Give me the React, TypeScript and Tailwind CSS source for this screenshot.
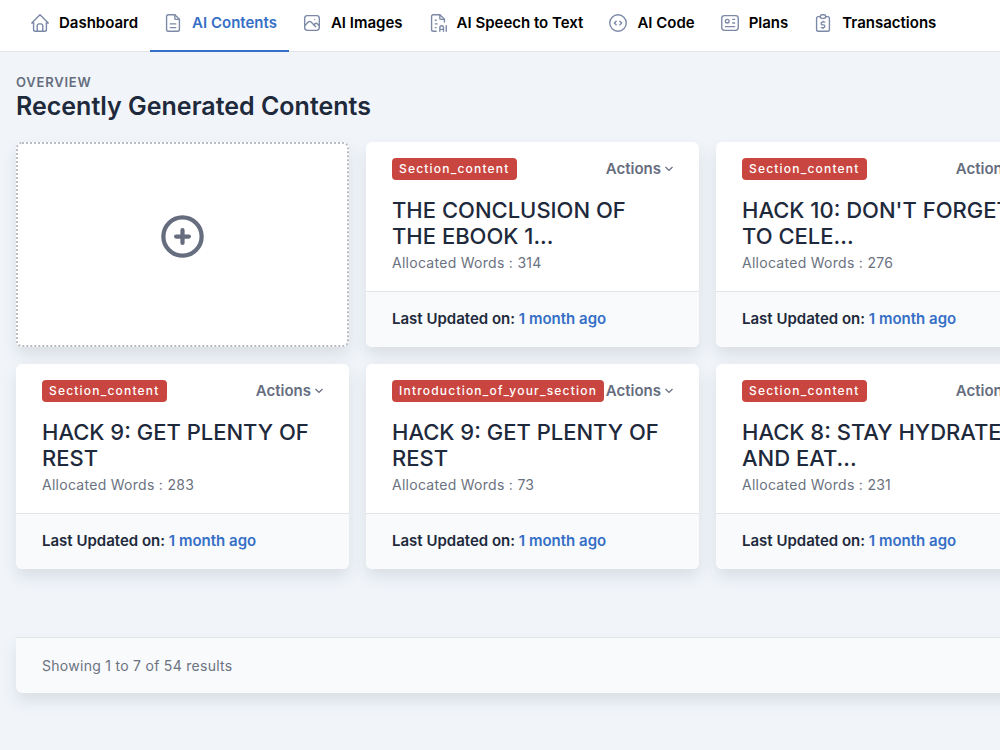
import type { FC, ReactNode } from "react";

type NavItem = {
	label: string;
	icon: ReactNode;
	active?: boolean;
};

type Content = {
	tag: string;
	title: string;
	words: number;
};

const Icon: FC<{ children: ReactNode }> = ({ children }) => (
	<svg
		className="size-[22px] shrink-0 text-[#7c89a6]"
		viewBox="0 0 24 24"
		fill="none"
		stroke="currentColor"
		strokeWidth="1.5"
		strokeLinecap="round"
		strokeLinejoin="round"
		aria-hidden="true"
	>
		{children}
	</svg>
);

const navItems: NavItem[] = [
	{
		label: "Dashboard",
		icon: (
			<Icon>
				<path d="M5 12H3l9-9 9 9h-2" />
				<path d="M5 12v7a2 2 0 0 0 2 2h10a2 2 0 0 0 2-2v-7" />
				<path d="M9 21v-6a2 2 0 0 1 2-2h2a2 2 0 0 1 2 2v6" />
			</Icon>
		),
	},
	{
		label: "AI Contents",
		active: true,
		icon: (
			<Icon>
				<path d="M14 3v4a1 1 0 0 0 1 1h4" />
				<path d="M17 21H7a2 2 0 0 1-2-2V5a2 2 0 0 1 2-2h7l5 5v11a2 2 0 0 1-2 2z" />
				<path d="M9 13h6M9 17h6" />
			</Icon>
		),
	},
	{
		label: "AI Images",
		icon: (
			<Icon>
				<path d="M15 8h.01" />
				<rect x="4" y="4" width="16" height="16" rx="3" />
				<path d="M4 15l4-4a3 5 0 0 1 3 0l5 5" />
				<path d="M14 14l1-1a3 5 0 0 1 3 0l2 2" />
			</Icon>
		),
	},
	{
		label: "AI Speech to Text",
		icon: (
			<Icon>
				<path d="M14 3v4a1 1 0 0 0 1 1h4" />
				<path d="M10 21H7a2 2 0 0 1-2-2V5a2 2 0 0 1 2-2h7l5 5v3" />
				<path d="M9 9h1M9 13h2M9 17h1" />
				<path d="M14 21v-4a2 2 0 1 1 4 0v4M14 19h4M21 15v6" />
			</Icon>
		),
	},
	{
		label: "AI Code",
		icon: (
			<Icon>
				<circle cx="12" cy="12" r="9" />
				<path d="M10 10l-2 2 2 2M14 10l2 2-2 2" />
			</Icon>
		),
	},
	{
		label: "Plans",
		icon: (
			<Icon>
				<rect x="3" y="4" width="18" height="16" rx="3" />
				<circle cx="9" cy="10" r="2" />
				<path d="M15 8h2M15 12h2M7 16h10" />
			</Icon>
		),
	},
	{
		label: "Transactions",
		icon: (
			<Icon>
				<path d="M9 5H7a2 2 0 0 0-2 2v12a2 2 0 0 0 2 2h10a2 2 0 0 0 2-2V7a2 2 0 0 0-2-2h-2" />
				<rect x="9" y="3" width="6" height="4" rx="2" />
				<path d="M14 11h-2.500a1.500 1.500 0 0 0 0 3h1a1.500 1.500 0 0 1 0 3H10M12 17v1m0-8v1" />
			</Icon>
		),
	},
];

const contents: Content[] = [
	{ tag: "Section_content", title: "THE CONCLUSION OF THE EBOOK 1...", words: 314 },
	{ tag: "Section_content", title: "HACK 10: DON'T FORGET TO CELE...", words: 276 },
	{ tag: "Section_content", title: "HACK 9: GET PLENTY OF REST", words: 283 },
	{ tag: "Introduction_of_your_section", title: "HACK 9: GET PLENTY OF REST", words: 73 },
	{ tag: "Section_content", title: "HACK 8: STAY HYDRATED AND EAT...", words: 231 },
];

const ContentCard: FC<Content> = ({ tag, title, words }) => (
	<article className="flex h-[205px] flex-col overflow-hidden rounded-md bg-white shadow-[0_8px_16px_rgba(30,41,59,0.11)]">
		<div className="flex-auto px-[26px] pt-[15px]">
			<div className="flex items-center justify-between">
				<span className="rounded bg-[#c9453f] px-[7px] py-1 text-xs leading-[14px] font-medium tracking-widest text-white">
					{tag}
				</span>
				<button
					type="button"
					className="flex items-center gap-1 text-[15px] leading-6 font-semibold text-[#656d7e]"
				>
					Actions
					<svg className="size-2" viewBox="0 0 8 8" fill="none" stroke="currentColor" strokeWidth="1.2" aria-hidden="true">
						<path d="M.5 2L4 5.500 7.500 2" />
					</svg>
				</button>
			</div>
			<h2 className="mt-4 text-[22px] leading-[26px] font-medium text-[#1e293b]">{title}</h2>
			<p className="mt-1 text-sm tracking-[0.02em] text-[#6b7280]">Allocated Words : {words}</p>
		</div>
		<footer className="flex h-14 items-center border-t border-[#e1e5ea] bg-[#f8fafc] px-[26px] text-[15px] font-semibold text-[#1e293b]">
			<span>
				Last Updated on:{" "}
				<a href="#" className="text-[#366fc6]">
					1 month ago
				</a>
			</span>
		</footer>
	</article>
);

export default function App() {
	return (
		<div className="min-h-screen overflow-hidden bg-[#f1f5fa] font-['Inter',sans-serif]">
			<header className="border-b border-[#e1e5ea] bg-white px-[17px]">
				<nav className="flex h-[51px]">
					{navItems.map(({ label, icon, active }) => (
						<a
							key={label}
							href="#"
							className={
								active
									? "-mb-px flex items-center gap-2 border-b-2 border-[#366fc6] px-3 pb-1 text-[15px] font-semibold whitespace-nowrap text-[#366fc6]"
									: "flex items-center gap-2 px-3 pb-[5px] text-[15px] font-semibold whitespace-nowrap text-black"
							}
						>
							{icon}
							{label}
						</a>
					))}
				</nav>
			</header>
			<main className="min-w-[1065px] px-4 pt-[22px]">
				<p className="text-[13px] leading-4 font-semibold tracking-[0.06em] text-[#656d7e]">OVERVIEW</p>
				<h1 className="text-[25px] leading-8 font-semibold text-[#1e293b]">Recently Generated Contents</h1>
				<div className="mt-5 grid grid-cols-3 gap-[17px]">
					<button
						type="button"
						aria-label="New content"
						className="flex items-center justify-center rounded-md border-2 border-dotted border-[#b9bcc1] bg-white pb-4 text-[#656d7e] shadow-[0_8px_16px_rgba(30,41,59,0.11)]"
					>
						<svg
							className="size-[51px]"
							viewBox="0 0 24 24"
							fill="none"
							stroke="currentColor"
							strokeWidth="2"
							strokeLinecap="round"
							aria-hidden="true"
						>
							<circle cx="12" cy="12" r="9" />
							<path d="M9 12h6M12 9v6" />
						</svg>
					</button>
					{contents.map((content) => (
						<ContentCard key={`${content.title}-${content.words}`} {...content} />
					))}
				</div>
				<div className="mt-[68px] flex h-14 items-center rounded-b-md border-t border-[#e1e5ea] bg-[#f8fafc] px-[26px] text-sm tracking-[0.02em] text-[#6b7280] shadow-[0_8px_16px_rgba(30,41,59,0.11)]">
					Showing 1 to 7 of 54 results
				</div>
			</main>
		</div>
	);
}
